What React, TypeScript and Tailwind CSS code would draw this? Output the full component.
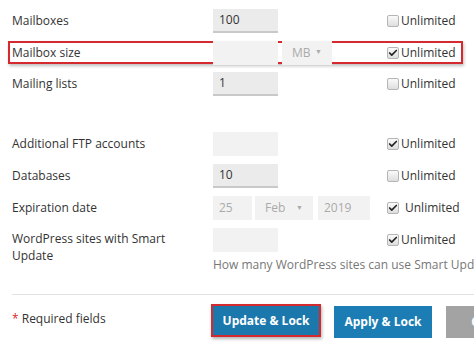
import { Check } from 'lucide-react';

function Checkbox({ checked }: { checked: boolean }) {
    return (
        <span className="flex h-[12px] w-[12px] shrink-0 items-center justify-center rounded-[2px] border border-[#b5b5b5] bg-gradient-to-b from-[#fafafa] to-[#dedede]">
            {checked && <Check className="h-[10px] w-[10px] text-[#222]" strokeWidth={4} />}
        </span>
    );
}

function Unlimited({ checked, wide }: { checked: boolean; wide?: boolean }) {
    return (
        <label className={`flex items-center ${wide ? 'gap-[6px]' : 'gap-[2px]'} whitespace-nowrap text-[12px] text-[#333]`}>
            <Checkbox checked={checked} />
            <span>Unlimited</span>
        </label>
    );
}

function Field({ value, disabled, w = 'w-[65px]' }: { value?: string; disabled?: boolean; w?: string }) {
    return (
        <div
            className={`flex h-[24px] ${w} shrink-0 items-center px-[6px] text-[12px] ${
                disabled ? 'bg-[#f2f2f2] text-[#aaa]' : 'border-b-2 border-[#c9c9c9] bg-[#ebebeb] text-[#333]'
            }`}
        >
            {value}
        </div>
    );
}

function Select({ value, w }: { value: string; w: string }) {
    return (
        <div className={`flex h-[24px] ${w} shrink-0 items-center justify-between bg-[#f2f2f2] px-[10px] text-[12px] text-[#aaa]`}>
            <span>{value}</span>
            <span className="text-[7px]">▼</span>
        </div>
    );
}

function Row({ label, children, right }: { label: string; children?: React.ReactNode; right: React.ReactNode }) {
    return (
        <div className="flex h-[32px] items-center">
            <div className="w-[201px] shrink-0 text-[12px] text-[#333]">{label}</div>
            <div className="flex w-[174px] shrink-0 items-center">{children}</div>
            {right}
        </div>
    );
}

export default function App() {
    return (
        <div className="h-[353px] w-[474px] overflow-hidden bg-white pt-[5px] font-['Open_Sans',sans-serif]">
            <div className="px-[12px]">
                <Row label="Mailboxes" right={<Unlimited checked={false} />}>
                    <Field value="100" />
                </Row>

                <div className="-mx-[4px] my-[4px] flex h-[23px] w-[455px] items-center border-2 border-[#d42a2f] pl-[2px] shadow-[1px_2px_3px_rgba(0,0,0,0.25)]">
                    <div className="w-[201px] shrink-0 text-[12px] text-[#333]">Mailbox size</div>
                    <div className="flex w-[174px] shrink-0 items-center gap-[4px]">
                        <Field disabled w="w-[65px]" />
                        <Select value="MB" w="w-[50px]" />
                    </div>
                    <Unlimited checked />
                </div>

                <Row label="Mailing lists" right={<Unlimited checked={false} />}>
                    <Field value="1" />
                </Row>

                <div className="h-[28px]" />

                <Row label="Additional FTP accounts" right={<Unlimited checked />}>
                    <Field disabled />
                </Row>
                <Row label="Databases" right={<Unlimited checked={false} />}>
                    <Field value="10" />
                </Row>
                <Row label="Expiration date" right={<Unlimited checked wide />}>
                    <div className="flex items-center">
                        <Field value="25" disabled w="w-[39px]" />
                        <div className="ml-[3px]">
                            <Select value="Feb" w="w-[58px]" />
                        </div>
                        <div className="ml-[5px]">
                            <Field value="2019" disabled w="w-[52px]" />
                        </div>
                    </div>
                </Row>

                <div className="flex">
                    <div className="w-[201px] shrink-0 pr-[20px] pt-[6px] text-[12px] leading-[17px] text-[#333]">
                        WordPress sites with Smart Update
                    </div>
                    <div className="flex min-w-0 flex-col">
                        <div className="flex h-[32px] items-center">
                            <div className="w-[174px] shrink-0">
                                <Field disabled />
                            </div>
                            <Unlimited checked />
                        </div>
                        <div className="whitespace-nowrap text-[12px] leading-[18px] text-[#777]">
                            How many WordPress sites can use Smart Update
                        </div>
                    </div>
                </div>
            </div>

            <div className="ml-[12px] mt-[20px] border-t border-[#e3e3e3]" />

            <div className="flex items-start pl-[12px] pt-[9px]">
                <div className="w-[199px] shrink-0 pt-[6px] text-[12px] text-[#333]">
                    <span className="text-[#d42a2f]">*</span> Required fields
                </div>
                <div className="shrink-0 border-2 border-[#d42a2f] shadow-[1px_2px_3px_rgba(0,0,0,0.3)]">
                    <button className="h-[29px] w-[106px] whitespace-nowrap bg-[#1b78ad] text-[12px] font-bold text-white">Update &amp; Lock</button>
                </div>
                <button className="ml-[13px] mt-[2px] h-[32px] w-[98px] shrink-0 whitespace-nowrap bg-[#1b7db4] text-[12px] font-bold text-white">Apply &amp; Lock</button>
                <button className="ml-[14px] mt-[2px] h-[32px] w-[90px] shrink-0 whitespace-nowrap bg-[#a3a3a3] text-[12px] font-bold text-white">Cancel</button>
            </div>
        </div>
    );
}
